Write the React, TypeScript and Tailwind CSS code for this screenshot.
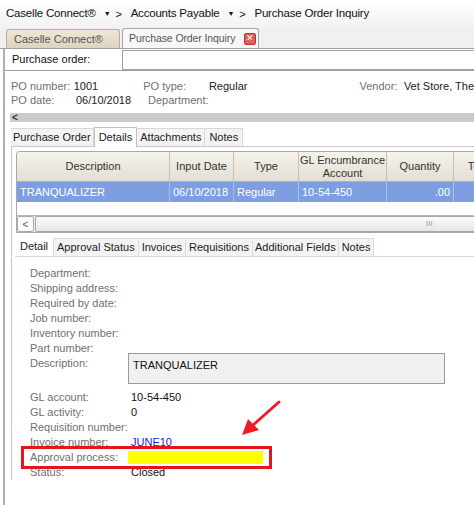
import React from "react";

const font = { fontFamily: "'Liberation Sans', Arial, sans-serif" };

function Crumb({ label, last }: { label: string; last?: boolean }) {
  return (
    <div className="flex items-center">
      <span>{label}</span>
      {!last && (
        <span className="flex items-center ml-[8px] mr-[9px] gap-[5px] text-[11px]">
          <span className="text-[7px]">▼</span>
          <span>&gt;</span>
        </span>
      )}
    </div>
  );
}

const columns = [
  { label: "Description", w: "w-[153px]" },
  { label: "Input Date", w: "w-[64px]" },
  { label: "Type", w: "w-[65px]" },
  { label: "GL Encumbrance|Account", w: "w-[88px]" },
  { label: "Quantity", w: "w-[67px]" },
  { label: "To", w: "w-[40px]" },
];

const row = ["TRANQUALIZER", "06/10/2018", "Regular", "10-54-450", ".00", ""];

const detailLabels = [
  "Department:",
  "Shipping address:",
  "Required by date:",
  "Job number:",
  "Inventory number:",
  "Part number:",
];

const poTabs = [
  { label: "Purchase Order", cls: "px-[2px] border-l" },
  { label: "Details", active: true },
  { label: "Attachments", cls: "px-[3px]" },
  { label: "Notes", cls: "px-[4px]" },
];

const detailTabs = ["Approval Status", "Invoices", "Requisitions", "Additional Fields", "Notes"];

function Field({ label, value, blue }: { label: string; value?: string; blue?: boolean }) {
  return (
    <div className="flex h-[15px] items-center">
      <span className="w-[101px] text-[#707070]">{label}</span>
      <span className={blue ? "text-[#1a1adc]" : "text-[#111]"}>{value}</span>
    </div>
  );
}

export default function App() {
  return (
    <div
      className="relative w-[474px] h-[505px] overflow-hidden bg-white text-[11px] text-[#222] whitespace-nowrap"
      style={font}
    >
      {/* breadcrumb */}
      <div className="h-[28px] flex items-center pl-[6px] text-[11.5px] tracking-[-0.2px] text-[#111] bg-gradient-to-b from-white to-[#f2f2f2]">
        <Crumb label="Caselle Connect®" />
        <Crumb label="Accounts Payable" />
        <Crumb label="Purchase Order Inquiry" last />
      </div>

      {/* window tabs */}
      <div className="h-[21px] flex items-end pl-[6px] bg-[#f0f0f0] border-b border-[#a0a0a0]">
        <div className="h-[19px] w-[114px] mr-[2px] flex items-center pl-[7px] rounded-t-[3px] border border-b-0 border-[#b8ad98] bg-gradient-to-b from-[#efe7d8] to-[#ddd2bd] text-[#555]">
          Caselle Connect®
        </div>
        <div className="h-[20px] w-[137px] flex items-center pl-[6px] rounded-t-[3px] border border-b-0 border-[#a8a8a8] bg-[#f7f7f7] text-[#555] text-[10.5px] tracking-[-0.1px]">
          <span>Purchase Order Inquiry</span>
          <span className="ml-auto mr-[2px] w-[12px] h-[12px] rounded-[2px] bg-[#e06060] border border-[#c03030] flex items-center justify-center text-white text-[9px] leading-none">
            ✕
          </span>
        </div>
      </div>

      {/* main frame */}
      <div className="ml-[3px] border-l-2 border-[#b0b0b0] h-full">
        <div className="h-[22px] flex items-center border-b border-[#a0a0a0]">
          <span className="w-[117px] pl-[7px] text-[#111]">Purchase order:</span>
          <div className="flex-1 h-[20px] bg-white border border-[#a0a0a0] border-r-0" />
        </div>

        <div className="pt-[8px] pl-[6px]">
          <div className="flex h-[14px] items-center">
            <span className="w-[65px] text-[#707070]">PO number:</span>
            <span className="w-[72px]">1001</span>
            <span className="w-[68px] text-[#707070]">PO type:</span>
            <span className="w-[156px]">Regular</span>
            <span className="w-[46px] text-[#707070]">Vendor:</span>
            <span>Vet Store, The</span>
          </div>
          <div className="flex h-[14px] items-center">
            <span className="w-[65px] text-[#707070]">PO date:</span>
            <span className="w-[72px]">06/10/2018</span>
            <span className="text-[#707070]">Department:</span>
          </div>
        </div>

        {/* horizontal scrollbar */}
        <div className="mt-[6px] ml-[5px] h-[9px] bg-[#cbcbcb] flex items-center pl-[2px] text-[10px] font-bold text-[#333]">
          &lt;
        </div>

        {/* tabs */}
        <div className="mt-[5px] ml-[6px] flex items-end h-[20px] border-b border-[#c8c8c8]">
          {poTabs.map((t) =>
            t.active ? (
              <div key={t.label} className="h-[20px] px-[4px] flex items-center bg-white border border-b-0 border-[#c0c0c0] -mb-px">
                {t.label}
              </div>
            ) : (
              <div key={t.label} className={`h-[18px] flex items-center bg-[#f3f3f3] border border-b-0 border-l-0 border-[#d8d8d8] ${t.cls}`}>
                {t.label}
              </div>
            )
          )}
        </div>

        <div className="ml-[6px] border-l border-[#c8c8c8] pl-[3px] pt-[4px]">
          {/* grid */}
          <div className="ml-[1px] border border-r-0 border-[#a8a8a8] rounded-tl-[4px]">
            <div className="flex h-[30px] bg-gradient-to-b from-[#f6f3ec] to-[#e4ded2] border-b border-[#b8b0a0] rounded-tl-[4px]">
              {columns.map((c) => (
                <div
                  key={c.label}
                  className={`${c.w} shrink-0 flex flex-col items-center justify-center leading-[13px] border-r border-[#c8c0b0] text-[#333]`}
                >
                  {c.label.split("|").map((part) => (
                    <span key={part}>{part}</span>
                  ))}
                </div>
              ))}
            </div>
            <div className="flex h-[20px] bg-[#7d9fe2] text-white">
              {row.map((v, i) => (
                <div
                  key={i}
                  className={`${columns[i].w} shrink-0 flex items-center px-[3px] border-r border-[#a9c0ee] ${i === 4 ? "justify-end" : ""}`}
                >
                  {v}
                </div>
              ))}
            </div>
            <div className="h-[13px]" />
            <div className="flex h-[17px] border-t border-[#b8b8b8] bg-[#f0f0f0]">
              <div className="w-[17px] h-[16px] flex items-center justify-center border border-[#a8a8a8] bg-[#fafafa] rounded-[2px] text-[#555] text-[10px]">
                &lt;
              </div>
              <div className="flex-1 h-[16px] ml-[1px] border border-r-0 border-[#a8a8a8] rounded-l-[2px] bg-gradient-to-b from-[#fbfbfb] to-[#e6e6e6] flex items-center pl-[390px] text-[8px] text-[#999]">
                III
              </div>
            </div>
          </div>

          {/* detail tabs */}
          <div className="mt-[4px] flex items-end h-[20px] border-b border-[#d8d8d8]">
            <div className="h-[20px] w-[38px] flex items-center justify-center bg-white">Detail</div>
            {detailTabs.map((t, i) => (
              <div
                key={t}
                className={`h-[18px] flex items-center bg-[#f3f3f3] border border-b-0 border-[#dcdcdc] ${i === 0 ? "" : "border-l-0"} ${t === "Additional Fields" ? "px-[2px]" : "px-[3px]"}`}
              >
                {t}
              </div>
            ))}
          </div>

          {/* detail body */}
          <div className="pl-[15px] pt-[9px]">
            {detailLabels.map((l) => (
              <Field key={l} label={l} />
            ))}
            <div className="flex h-[34px] pt-[1px]">
              <span className="w-[98px] text-[#707070] leading-[13px]">Description:</span>
              <div className="w-[317px] h-[31px] -mt-[4px] border border-[#9a9a9a] bg-[#f0f0f0] pl-[4px] pt-[3px] text-[#111]">
                TRANQUALIZER
              </div>
            </div>
            <Field label="GL account:" value="10-54-450" />
            <Field label="GL activity:" value="0" />
            <Field label="Requisition number:" />
            <Field label="Invoice number:" value="JUNE10" blue />
            <div className="-ml-[9px] -my-[4px] w-[251px] h-[23px] border-[3px] border-[#e8141c] flex items-center pl-[6px] relative z-10">
              <span className="w-[98px] text-[#707070]">Approval process:</span>
              <div className="w-[135px] h-[13px] bg-[#ffff00]" />
            </div>
            <Field label="Status:" value="Closed" />
          </div>
        </div>
      </div>

      {/* annotation arrow */}
      <svg className="absolute left-[236px] top-[398px]" width="50" height="42" viewBox="0 0 50 42">
        <line x1="43" y1="4" x2="16" y2="28" stroke="#ee1c24" strokeWidth="3" strokeLinecap="round" />
        <polygon points="6,37 12,21 23,32" fill="#ee1c24" />
      </svg>
    </div>
  );
}
